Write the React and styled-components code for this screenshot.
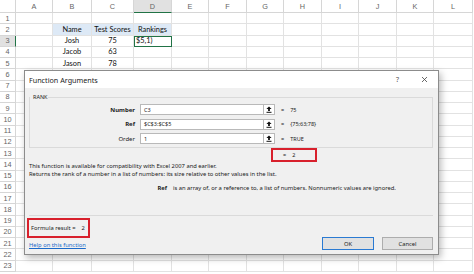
import React from "react";
import styled, { createGlobalStyle, css } from "styled-components";

const GlobalStyle = createGlobalStyle`
  html, body { margin: 0; padding: 0; background: #fff; overflow: hidden; }
  body { width: 474px; height: 274px; }
  * { box-sizing: border-box; }
`;

const COLS = [16, 37, 39, 42, 38, 37, 38, 37, 38, 37, 38, 37, 39];
const LETTERS = ["", "A", "B", "C", "D", "E", "F", "G", "H", "I", "J", "K", "L"];
const ROW_COUNT = 23;

const DATA = {
  "2B": { text: "Name", fill: true },
  "2C": { text: "Test Scores", fill: true },
  "2D": { text: "Rankings", fill: true },
  "3B": { text: "Josh" },
  "3C": { text: "75" },
  "3D": { text: "$5,1)", align: "left", active: true },
  "4B": { text: "Jacob" },
  "4C": { text: "63" },
  "5B": { text: "Jason" },
  "5C": { text: "78" },
};

const Page = styled.div`
  position: relative;
  width: 474px;
  height: 274px;
  overflow: hidden;
`;

const Sheet = styled.div`
  display: grid;
  grid-template-columns: ${COLS.map((c) => c + "px").join(" ")};
  grid-template-rows: 13px;
  grid-auto-rows: 11.25px;
  font-family: Lato, "Liberation Sans", sans-serif;
`;

const Cell = styled.div`
  border-right: 1px solid #e2e2e2;
  border-bottom: 1px solid #e2e2e2;
  font-size: 7.4px;
  color: #111;
  display: flex;
  align-items: center;
  justify-content: ${(p) => (p.$align === "left" ? "flex-start" : "center")};
  padding: 0 2px;
  white-space: nowrap;
  overflow: hidden;
  background: ${(p) => (p.$fill ? "#dde9f6" : "#fff")};
  ${(p) =>
    p.$active &&
    css`
      outline: 1.5px solid #217346;
      outline-offset: -1px;
      position: relative;
      z-index: 1;
    `}
`;

const HeadCell = styled.div`
  background: ${(p) => (p.$on ? "#e1e1e1" : "#fff")};
  border-right: 1px solid #d6d6d6;
  border-bottom: 1px solid #d6d6d6;
  color: #666;
  font-family: "Liberation Sans", sans-serif;
  font-size: 7.3px;
  display: flex;
  align-items: center;
  justify-content: center;
  ${(p) => p.$on && p.$col && css`border-bottom: 1.5px solid #217346;`}
  ${(p) => p.$on && p.$row && css`border-right: 1.5px solid #217346;`}
`;

const Dialog = styled.div`
  position: absolute;
  left: 24px;
  top: 70px;
  width: 415px;
  height: 185px;
  border: 1px solid #8c8c8c;
  background: #f0f0f0;
  box-shadow: 2px 3px 7px rgba(0, 0, 0, 0.28);
  display: flex;
  flex-direction: column;
  font-family: "Noto Sans", "Open Sans", sans-serif;
  color: #1a1a1a;
  z-index: 5;
`;

const TitleBar = styled.div`
  height: 17px;
  background: #fff;
  display: flex;
  align-items: center;
  padding-left: 4px;
  font-size: 7.2px;
  color: #222;
`;

const TitleText = styled.span`
  flex: 1;
`;

const TitleButton = styled.span`
  width: 27px;
  display: flex;
  justify-content: center;
  align-items: center;
  color: #555;
  font-size: 7px;
`;

const Body = styled.div`
  flex: 1;
  padding: 5px 5px 0 4px;
  display: flex;
  flex-direction: column;
`;

const Group = styled.fieldset`
  margin: 0;
  padding: 2px 0 3px 0;
  border: 1px solid #dadada;
  min-width: 0;
  display: flex;
  flex-direction: column;
  gap: 3.5px;
`;

const Legend = styled.legend`
  font-size: 5.5px;
  padding: 0 0 0 3px;
  margin-left: 0;
  color: #222;
  line-height: 9px;
`;

const ArgRow = styled.div`
  display: grid;
  grid-template-columns: 110px 123px 12px auto;
  align-items: center;
  height: 11px;
  font-size: 6px;
`;

const ArgLabel = styled.span`
  text-align: right;
  padding-right: 5px;
  font-weight: ${(p) => (p.$bold ? 700 : 400)};
`;

const ArgInput = styled.div`
  height: 11px;
  background: #fff;
  border: 1px solid #b9b9b9;
  border-right: none;
  font-size: 5.5px;
  display: flex;
  align-items: center;
  padding-left: 3px;
  color: #222;
`;

const RefButton = styled.div`
  height: 11px;
  background: #fff;
  border: 1px solid #b9b9b9;
  display: flex;
  align-items: center;
  justify-content: center;
`;

const ArgValue = styled.span`
  padding-left: 6px;
  font-size: 5.5px;
  display: flex;
  gap: 6px;
  color: #222;
`;

const ResultBox = styled.div`
  margin-left: 242px;
  width: 46px;
  height: 14px;
  border: 2px solid #d8202c;
  display: flex;
  align-items: center;
  padding-left: 10px;
  gap: 6px;
  font-size: 5.5px;
`;

const Description = styled.div`
  font-size: 5.8px;
  line-height: 8px;
  margin-top: 0;
`;

const ParamHelp = styled.div`
  display: grid;
  grid-template-columns: 138px auto;
  column-gap: 6px;
  font-size: 5.8px;
  line-height: 8px;
  margin-top: 6px;
`;

const ParamName = styled.span`
  text-align: right;
  font-weight: 700;
`;

const Separator = styled.div`
  border-top: 1px solid #dadada;
  margin-top: auto;
`;

const Footer = styled.div`
  display: flex;
  justify-content: space-between;
  align-items: flex-end;
  padding-bottom: 4px;
`;

const FooterLeft = styled.div`
  display: flex;
  flex-direction: column;
`;

const FormulaResult = styled.div`
  margin: 2px 0 0 -2px;
  width: 63px;
  height: 20px;
  border: 2px solid #d8202c;
  display: flex;
  align-items: center;
  padding-left: 2px;
  font-size: 5.8px;
  gap: 6px;
`;

const HelpLink = styled.a`
  margin-top: 3px;
  font-size: 5.8px;
  line-height: 9px;
  color: #1b6ac9;
  text-decoration: underline;
`;

const Buttons = styled.div`
  display: flex;
  gap: 8px;
`;

const Button = styled.div`
  width: ${(p) => (p.$primary ? 52 : 51)}px;
  height: 13px;
  background: #e1e1e1;
  border: ${(p) => (p.$primary ? "1.5px solid #2a7ad2" : "1px solid #adadad")};
  display: flex;
  align-items: center;
  justify-content: center;
  font-size: 5.8px;
  color: #222;
`;

const RefIcon = () => (
  <svg width="6" height="7" viewBox="0 0 6 7">
    <path d="M3 0.5 L5.6 3 H3.9 V5 H2.1 V3 H0.4 Z" fill="#111" />
    <rect x="0.5" y="5.8" width="5" height="1" fill="#111" />
  </svg>
);

const CloseIcon = () => (
  <svg width="7" height="7" viewBox="0 0 7 7">
    <path d="M1 1 L6 6 M6 1 L1 6" stroke="#444" strokeWidth="0.8" />
  </svg>
);

const args = [
  { label: "Number", bold: true, input: "C3", value: "75" },
  { label: "Ref", bold: true, input: "$C$3:$C$5", value: "{75;63;78}" },
  { label: "Order", bold: false, input: "1", value: "TRUE" },
];

const Spreadsheet = () => {
  const cells = [];
  LETTERS.forEach((l, i) =>
    cells.push(
      <HeadCell key={"h" + i} $on={l === "D"} $col>
        {l}
      </HeadCell>
    )
  );
  for (let r = 1; r <= ROW_COUNT; r++) {
    cells.push(
      <HeadCell key={"r" + r} $on={r === 3} $row>
        {r}
      </HeadCell>
    );
    LETTERS.slice(1).forEach((l) => {
      const d = DATA[r + l] || {};
      cells.push(
        <Cell key={r + l} $fill={d.fill} $align={d.align} $active={d.active}>
          {d.text}
        </Cell>
      );
    });
  }
  return <Sheet>{cells}</Sheet>;
};

const App = () => {
  return (
    <Page>
      <GlobalStyle />
      <Spreadsheet />
      <Dialog>
        <TitleBar>
          <TitleText>Function Arguments</TitleText>
          <TitleButton>?</TitleButton>
          <TitleButton>
            <CloseIcon />
          </TitleButton>
        </TitleBar>
        <Body>
          <Group>
            <Legend>RANK</Legend>
            {args.map((a) => (
              <ArgRow key={a.label}>
                <ArgLabel $bold={a.bold}>{a.label}</ArgLabel>
                <ArgInput>{a.input}</ArgInput>
                <RefButton>
                  <RefIcon />
                </RefButton>
                <ArgValue>
                  <span>=</span>
                  <span>{a.value}</span>
                </ArgValue>
              </ArgRow>
            ))}
          </Group>
          <ResultBox>
            <span>=</span>
            <span>2</span>
          </ResultBox>
          <Description>
            This function is available for compatibility with Excel 2007 and earlier.
            <br />
            Returns the rank of a number in a list of numbers: its size relative to other values in the list.
          </Description>
          <ParamHelp>
            <ParamName>Ref</ParamName>
            <span>is an array of, or a reference to, a list of numbers. Nonnumeric values are ignored.</span>
          </ParamHelp>
          <Separator />
          <Footer>
            <FooterLeft>
              <FormulaResult>
                <span>Formula result =</span>
                <span>2</span>
              </FormulaResult>
              <HelpLink>Help on this function</HelpLink>
            </FooterLeft>
            <Buttons>
              <Button $primary>OK</Button>
              <Button>Cancel</Button>
            </Buttons>
          </Footer>
        </Body>
      </Dialog>
    </Page>
  );
};

export default App;
